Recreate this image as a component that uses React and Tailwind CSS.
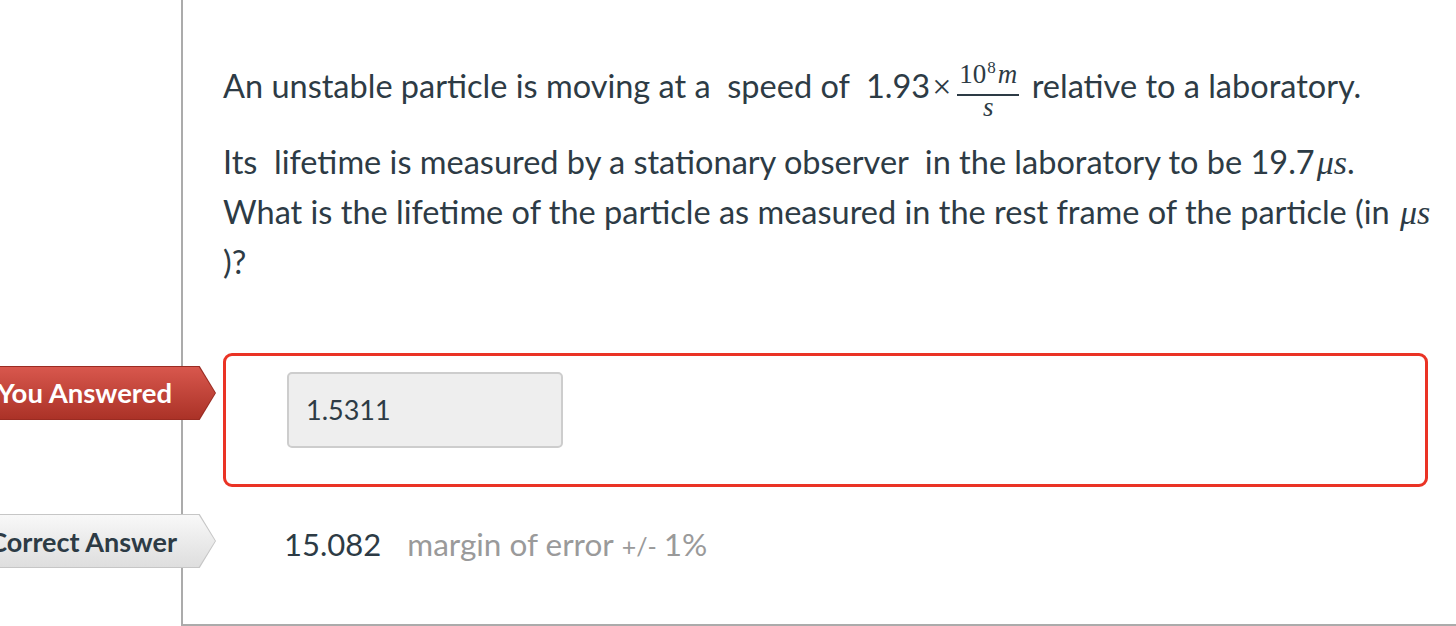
const lato = "font-['Lato','Open_Sans',sans-serif]";

const Frac = () => (
  <span className="inline-flex flex-col items-center align-[15px] -mt-[30px] -mb-[40px] ml-[6px] mr-[4px] font-['Liberation_Serif','DejaVu_Serif',serif]">
    <span className="text-[27px] leading-[28px] px-[2px] whitespace-nowrap">
      10<span className="text-[17px] align-[10px] ml-[1px]">8</span>
      <i className="ml-[2px]">m</i>
    </span>
    <span className="mt-[6px] h-[2px] w-full bg-[#2d3b45]" />
    <span className="text-[27px] leading-[24px] -mt-[1px] italic">s</span>
  </span>
);

const Mu = () => (
  <i className="font-['Liberation_Serif','DejaVu_Serif',serif] text-[34px] ml-[2px]">μs</i>
);

const RedTag = () => (
  <div className="absolute -left-[200px] top-[13px] w-[233px] h-[54px]">
    <div className="absolute inset-0 bg-[#9a2b22] [clip-path:polygon(0_0,93%_0,100%_50%,93%_100%,0_100%)]" />
    <div className="absolute inset-[1px] bg-gradient-to-b from-[#d8574d] to-[#ab3227] [clip-path:polygon(0_0,93%_0,100%_50%,93%_100%,0_100%)] flex items-center justify-end pr-[43px]">
      <span className="text-white font-bold text-[27.5px] leading-none">You Answered</span>
    </div>
  </div>
);

const GrayTag = () => (
  <div className="absolute -left-[200px] top-0 w-[233px] h-[54px]">
    <div className="absolute inset-0 bg-[#c6c6c6] [clip-path:polygon(0_0,93%_0,100%_50%,93%_100%,0_100%)]" />
    <div className="absolute inset-[1px] bg-gradient-to-b from-[#f8f8f8] to-[#dedede] [clip-path:polygon(0_0,93%_0,100%_50%,93%_100%,0_100%)] flex items-center justify-end pr-[38px]">
      <span className="text-[#2d3b45] font-bold text-[27px] leading-none">Correct Answer</span>
    </div>
  </div>
);

export default function App() {
  return (
    <div className={`${lato} bg-white text-[#2d3b45] h-[626px] overflow-hidden`}>
      <div className="ml-[181px] h-[626px] border-l-2 border-b-2 border-[#ababab]">
        <div className="pl-[40px] pt-[61px] text-[32.5px] leading-[49px] whitespace-nowrap">
          <p>
            An unstable particle is moving at a&nbsp; speed of&nbsp; 1.93
            <span className="font-['Liberation_Serif','DejaVu_Serif',serif] text-[34px] ml-[2px]">×</span>
            <Frac /> relative to a laboratory.
          </p>
          <p className="mt-[26px]">
            Its&nbsp; lifetime is measured by a stationary observer&nbsp; in the laboratory to be 19.7
            <Mu />.
            <br />
            What is the lifetime of the particle as measured in the rest frame of the particle (in <Mu />
            <br />
            )?
          </p>
        </div>

        <div className="relative mt-[67px]">
          <RedTag />
          <div className="ml-[40px] w-[1205px] h-[134px] border-[3px] border-[#ea3325] rounded-[9px] pl-[61px] pt-[16px]">
            <div className="w-[276px] h-[76px] bg-[#eeeeee] border-2 border-[#cdcdcd] rounded-[5px] flex items-center pl-[17px] text-[27px]">
              1.5311
            </div>
          </div>
        </div>

        <div className="relative mt-[27px] h-[54px] flex items-center">
          <GrayTag />
          <div className="ml-[101px] mt-[8px] flex items-baseline">
            <span className="text-[31px]">15.082</span>
            <span className="ml-[26px] text-[31.5px] text-[#9a9a9a]">margin of error</span>
            <span className="ml-[8px] text-[25px] text-[#9a9a9a]">+/-</span>
            <span className="ml-[7px] text-[31.5px] text-[#9a9a9a]">1%</span>
          </div>
        </div>
      </div>
    </div>
  );
}
